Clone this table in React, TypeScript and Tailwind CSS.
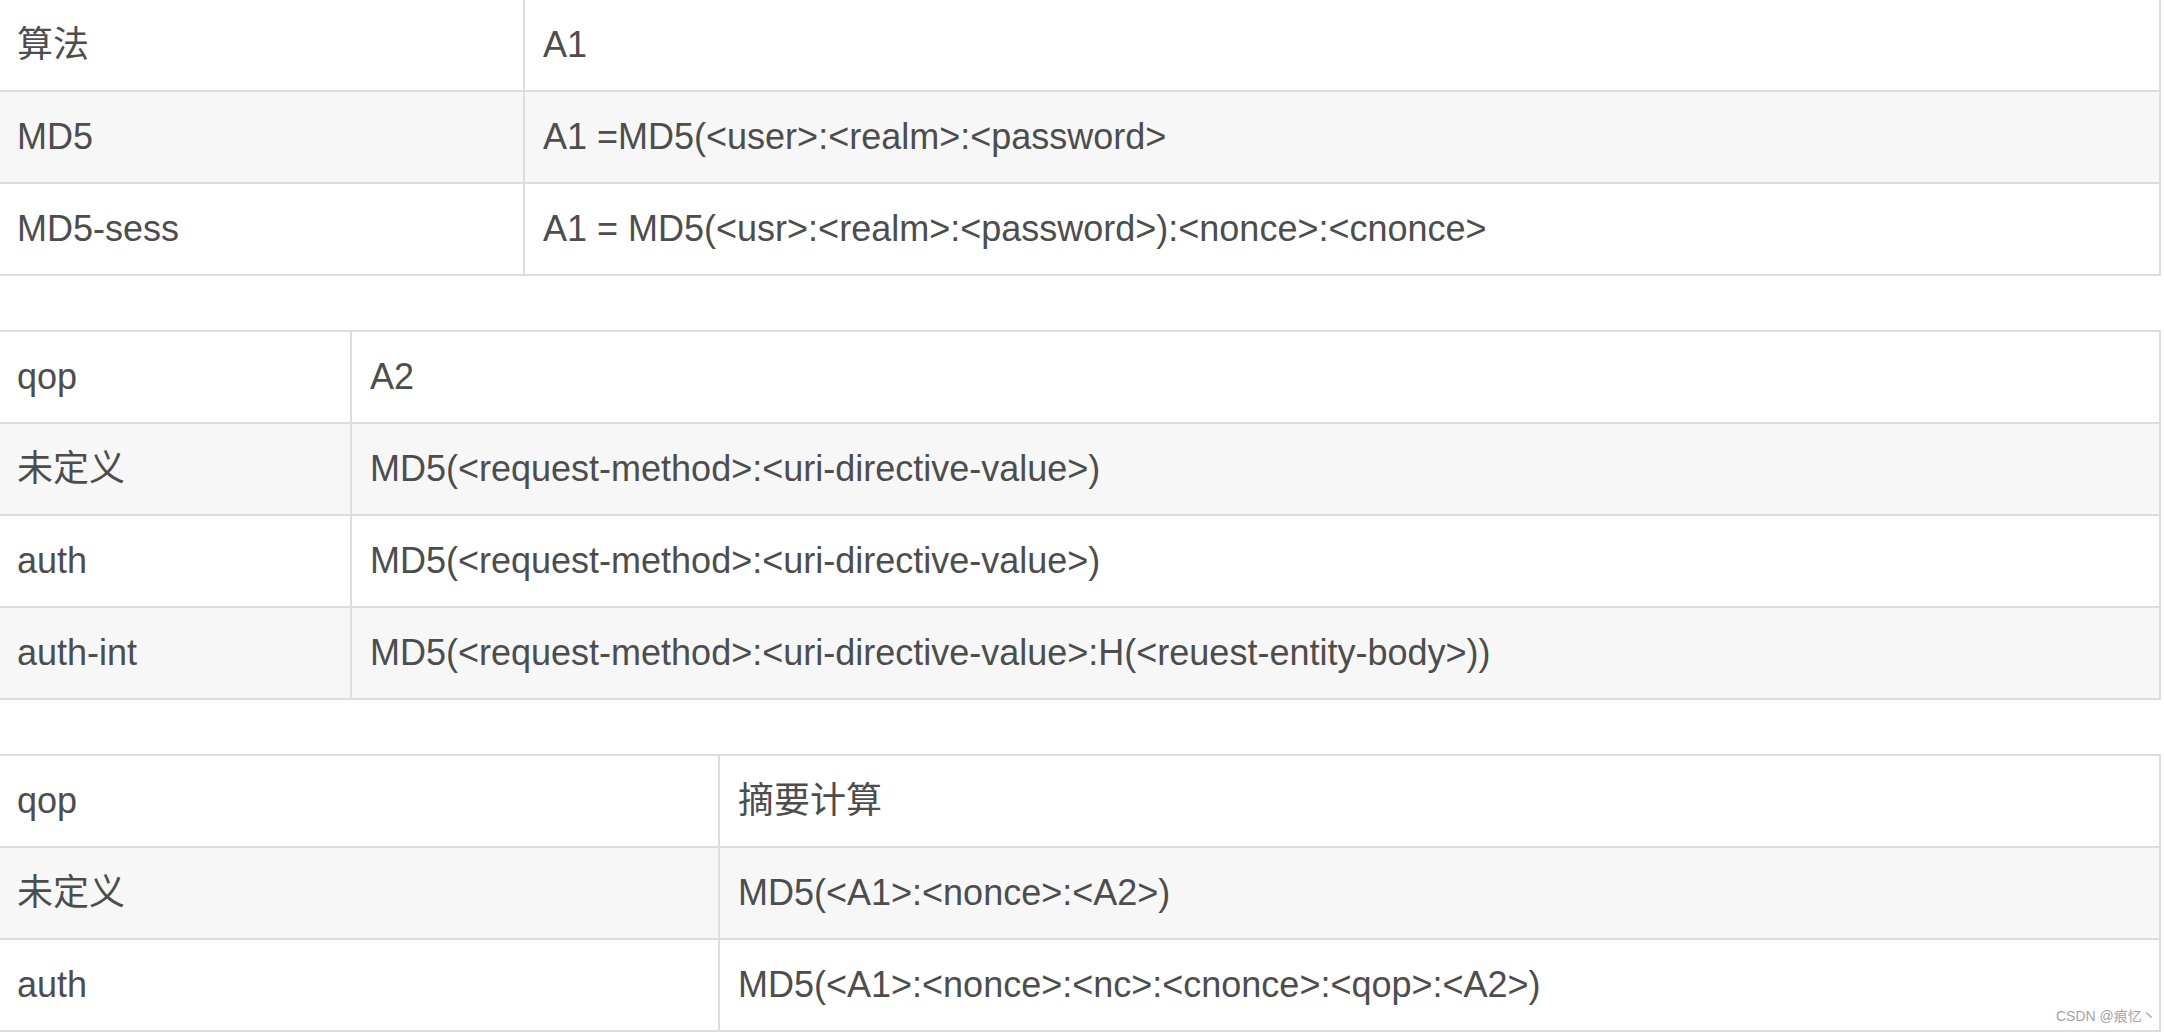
import React from "react";

type Row = [string, string];

function Table({
  col1,
  rows,
  topBorder,
  className,
}: {
  col1: string;
  rows: Row[];
  topBorder: boolean;
  className?: string;
}) {
  return (
    <div
      className={
        "w-[2161px] border-r-2 border-[#dddddd] " +
        (topBorder ? "border-t-2 " : "") +
        (className ?? "")
      }
    >
      {rows.map((r, i) => (
        <div
          key={i}
          className={
            "flex h-[92px] border-b-2 border-[#dddddd] " +
            (i % 2 === 1 ? "bg-[#f7f7f7]" : "bg-white")
          }
        >
          <div
            className="flex shrink-0 items-center border-r-2 border-[#dddddd] pb-[1px] pl-[17px]"
            style={{ width: col1 }}
          >
            {r[0]}
          </div>
          <div className="flex flex-1 items-center pb-[1px] pl-[18px]">{r[1]}</div>
        </div>
      ))}
    </div>
  );
}

export default function App() {
  return (
    <div
      className="relative h-[1034px] w-[2164px] overflow-hidden bg-white text-[36px] leading-none text-[#4d4d4d]"
      style={{ fontFamily: '"Liberation Sans", Arial, "Noto Sans CJK SC", sans-serif' }}
    >
      <Table
        col1="525px"
        topBorder={false}
        rows={[
          ["算法", "A1"],
          ["MD5", "A1 =MD5(<user>:<realm>:<password>"],
          ["MD5-sess", "A1 = MD5(<usr>:<realm>:<password>):<nonce>:<cnonce>"],
        ]}
      />
      <Table
        col1="352px"
        topBorder={true}
        className="mt-[54px]"
        rows={[
          ["qop", "A2"],
          ["未定义", "MD5(<request-method>:<uri-directive-value>)"],
          ["auth", "MD5(<request-method>:<uri-directive-value>)"],
          ["auth-int", "MD5(<request-method>:<uri-directive-value>:H(<reuest-entity-body>))"],
        ]}
      />
      <Table
        col1="720px"
        topBorder={true}
        className="mt-[54px]"
        rows={[
          ["qop", "摘要计算"],
          ["未定义", "MD5(<A1>:<nonce>:<A2>)"],
          ["auth", "MD5(<A1>:<nonce>:<nc>:<cnonce>:<qop>:<A2>)"],
        ]}
      />
      <div
        className="absolute left-[2056px] top-[1009px] text-[14px] leading-none text-[#a3a3a3]"
        style={{ fontFamily: '"Liberation Sans", "Noto Sans CJK SC", sans-serif', textShadow: "0 0 2px #fff" }}
      >
        CSDN @痕忆丶
      </div>
    </div>
  );
}
